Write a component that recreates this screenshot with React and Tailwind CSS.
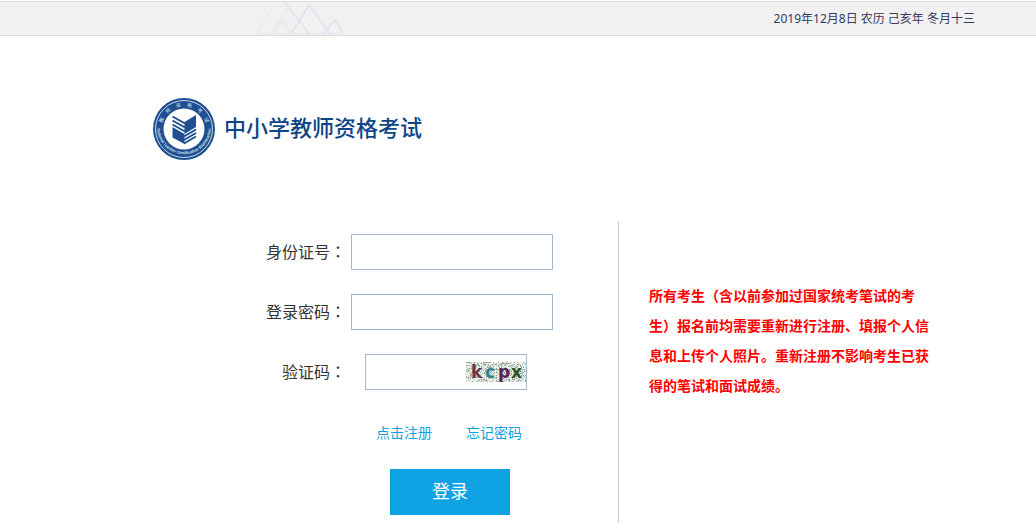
const colon = <span className="font-['Noto_Sans_CJK_TC',sans-serif]">：</span>

// Same speckles on every render
function makeNoise(seed, count) {
    let s = seed
    const next = (max) => {
        s = (s * 1103515245 + 12345) % 2147483648
        return Math.floor((s / 2147483648) * max)
    }
    let d = ''
    for (let i = 0; i < count; i++) {
        d += `M${next(60)} ${next(20)}h1v1h-1z`
    }
    return d
}

const grayNoise = makeNoise(7, 520)
const lightNoise = makeNoise(91, 260)

function Captcha() {
    return (
        <svg viewBox="0 0 60 20" className="w-[60px] h-5 overflow-visible" role="img" aria-label="验证码图片">
            <rect width="60" height="20" fill="#e9f3ea" />
            <path d={grayNoise} fill="#9aa69c" />
            <path d={lightNoise} fill="#cfd6d0" />
            <g fontFamily="DejaVu Sans, sans-serif" fontWeight="bold" fontSize="17">
                <text x="5" y="16" fill="#66384a">k</text>
                <text x="19" y="16" fill="#2f7f88">c</text>
                <text x="32" y="16" fill="#5a2350">p</text>
                <text x="45" y="16" fill="#2b4f2a">x</text>
            </g>
        </svg>
    )
}

function Peaks() {
    return (
        <svg viewBox="0 0 90 33" className="w-[90px] h-[33px]" fill="none" stroke="#e1e5ee" strokeWidth="2" aria-hidden="true">
            <path d="M1 32L20 1" stroke="#ebedf0" />
            <path d="M16 32L36 0" stroke="#e9ebef" />
            <path d="M20 32L27 18L37 32" stroke="#e8eaef" />
            <path d="M30 0L54 32" />
            <path d="M36 32L54 3L75 32" />
            <path d="M68 32L80 18L88 32" />
            <path d="M2 32H88" strokeWidth="1" />
        </svg>
    )
}

function Logo() {
    return (
        <svg viewBox="0 0 62 62" className="w-[62px] h-[62px]" aria-hidden="true">
            <defs>
                <path id="arc-top" d="M8.500 31A22.500 22.500 0 0 1 53.500 31" />
                <path id="arc-bottom" d="M4.500 24A27 27 0 1 0 57.500 24" />
            </defs>
            <circle cx="31" cy="31" r="31" fill="#1d4f91" />
            <circle cx="31" cy="31" r="28.500" fill="none" stroke="#c9d8ea" strokeWidth="1" />
            <circle cx="31" cy="31" r="20.500" fill="#fff" />
            <text fill="#dbe6f3" fontSize="5" fontFamily="Noto Sans CJK SC, sans-serif">
                {['教', '师', '资', '格', '考', '试'].map((char, i) => (
                    <textPath key={char} href="#arc-top" startOffset={`${12 + i * 15.2}%`} textAnchor="middle">{char}</textPath>
                ))}
            </text>
            <text fill="#dbe6f3" fontSize="4" fontWeight="bold" fontFamily="Liberation Sans, sans-serif">
                <textPath href="#arc-bottom" startOffset="50%" textAnchor="middle">National Teacher Certification Examination</textPath>
            </text>
            {/* open book: solid pages with ruled edges */}
            <g fill="#1d4f91">
                <path d="M31.500 24L43 17V29L31.500 36Z" />
                <path d="M19.500 29L31.500 36V46L19.500 39.500Z" />
            </g>
            <g fill="none" stroke="#1d4f91" strokeWidth="2">
                <path d="M19.500 18.500L32 25.500M19.500 22.500L32 29.500M19.500 26.500L32 33.500" />
                <path d="M31 38.500L43 31.500M31 42L43 35M31 45.500L43 38.500" />
            </g>
        </svg>
    )
}

export default function App() {
    const inputClass = 'h-9 border border-[#a3b9cc] bg-white px-2 text-base outline-none'
    const labelClass = 'w-20 shrink-0 pb-0.5 text-right text-base whitespace-nowrap'

    return (
        <div className="bg-white text-[#333] font-['Noto_Sans_CJK_SC',sans-serif]">
            <header className="mt-px flex justify-between items-center border-y border-[#dcdcdf] bg-[#f1f1f1] pl-[255px] pr-[61px]">
                <Peaks />
                <p className="text-xs text-[#333c5e] font-['Noto_Sans','Noto_Sans_CJK_SC',sans-serif]">2019年12月8日 农历 己亥年 冬月十三</p>
            </header>

            <main className="mx-auto max-w-[824px] pt-[62px]">
                <div className="flex items-center gap-[9px] pl-[47px]">
                    <Logo />
                    <h1 className="pb-1.5 text-[22px] leading-8 font-medium text-[#0f4486]">中小学教师资格考试</h1>
                </div>

                <div className="mt-[61px] flex">
                    <form className="w-[513px] shrink-0 border-r border-[#ccc] pl-40 pt-[13px] pb-2" onSubmit={(e) => e.preventDefault()}>
                        <div className="flex flex-col gap-6">
                            <div className="flex items-center gap-[5px]">
                                <label htmlFor="idNumber" className={labelClass}>身份证号{colon}</label>
                                <input id="idNumber" type="text" className={`${inputClass} w-[202px]`} />
                            </div>
                            <div className="flex items-center gap-[5px]">
                                <label htmlFor="password" className={labelClass}>登录密码{colon}</label>
                                <input id="password" type="password" className={`${inputClass} w-[202px]`} />
                            </div>
                            <div className="flex items-center gap-[19px]">
                                <label htmlFor="captcha" className={labelClass}>验证码{colon}</label>
                                <div className="relative flex">
                                    <input id="captcha" type="text" className={`${inputClass} w-[162px] pr-16`} />
                                    <div className="absolute right-px top-2">
                                        <Captcha />
                                    </div>
                                </div>
                            </div>
                        </div>
                        <div className="mt-8 ml-[110px] flex gap-[34px] text-sm text-[#0ea2e3]">
                            <a href="#register">点击注册</a>
                            <a href="#forgot">忘记密码</a>
                        </div>
                        <button type="submit" className="mt-[27px] ml-[124px] block h-[46px] w-[120px] bg-[#0ea2e3] pb-1 text-lg text-white">登录</button>
                    </form>

                    <p className="pl-[30px] pt-[59px] text-sm leading-[30px] font-bold text-[#f00]">
                        所有考生（含以前参加过国家统考笔试的考生）报名前均需要重新进行注册、填报个人信息和上传个人照片。重新注册不影响考生已获得的笔试和面试成绩。
                    </p>
                </div>
            </main>
        </div>
    )
}
